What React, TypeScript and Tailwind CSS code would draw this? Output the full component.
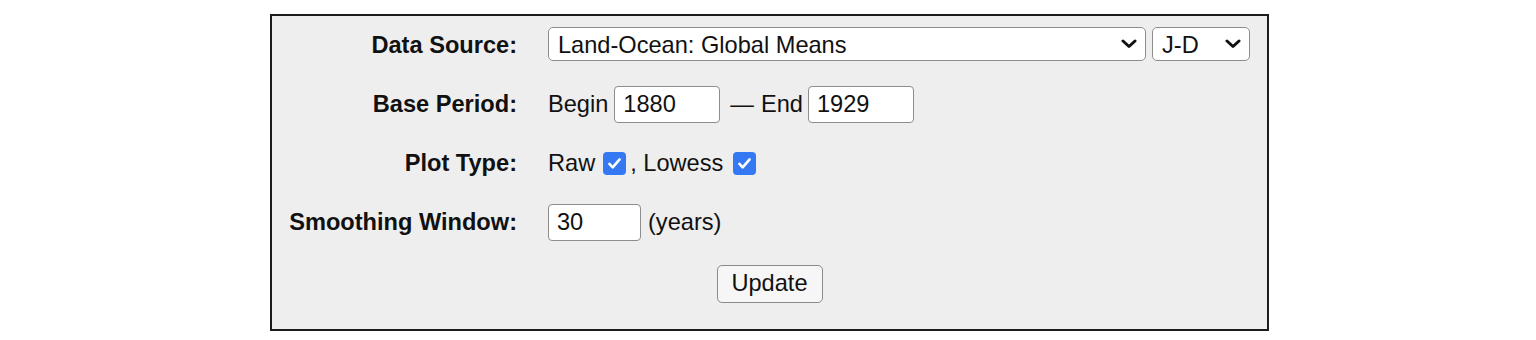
import React from 'react';

const Chevron = ({ className = '' }: { className?: string }) => (
  <svg viewBox="0 0 16 10" className={className} fill="none">
    <path d="M2 2l6 5.5L14 2" stroke="#111" strokeWidth="3" strokeLinecap="round" strokeLinejoin="round" />
  </svg>
);

const Check = () => (
  <span className="inline-flex shrink-0 items-center justify-center w-[23px] h-[23px] rounded-[4px] bg-[#3479f3]">
    <svg viewBox="0 0 16 16" className="w-[17px] h-[17px]" fill="none">
      <path d="M3.2 8.4l3.1 3.2L12.8 4.2" stroke="#fff" strokeWidth="2.5" strokeLinecap="round" strokeLinejoin="round" />
    </svg>
  </span>
);

const Label = ({ children }: { children: React.ReactNode }) => (
  <div className="text-right font-bold">{children}</div>
);

const inputCls =
  'h-[37px] px-[8px] bg-white border border-[#8d8d8d] rounded-[4px] text-[#111] outline-none';

export default function App() {
  return (
    <div className="w-[1536px] h-[340px] bg-white pt-[14px] font-['Liberation_Sans',Arial,sans-serif] text-[23.6px] text-[#111]">
      <div className="ml-[270px] w-[999px] h-[317px] border-2 border-[#1c1c1c] bg-[#eeeeee]">
        <div className="grid grid-cols-[245px_1fr] gap-x-[31px] [&>*]:h-[59px] [&>*]:flex [&>*]:items-center [&>div:nth-child(odd)]:justify-end">
          <Label>Data Source:</Label>
          <div className="gap-[6px]">
            <div className="relative">
              <select
                defaultValue="lo"
                className="appearance-none w-[598px] h-[34px] pl-[9px] bg-white border border-[#8d8d8d] rounded-[5px] text-[#111]"
              >
                <option value="lo">Land-Ocean: Global Means</option>
              </select>
              <Chevron className="absolute right-[9px] top-[12px] w-[16px] h-[10px] pointer-events-none" />
            </div>
            <div className="relative">
              <select
                defaultValue="jd"
                className="appearance-none w-[98px] h-[34px] pl-[9px] bg-white border border-[#8d8d8d] rounded-[5px] text-[#111]"
              >
                <option value="jd">J-D</option>
              </select>
              <Chevron className="absolute right-[9px] top-[12px] w-[16px] h-[10px] pointer-events-none" />
            </div>
          </div>

          <Label>Base Period:</Label>
          <div>
            <span>Begin</span>
            <input className={`${inputCls} w-[106px] ml-[6px]`} defaultValue="1880" />
            <span className="ml-[10px]">—</span>
            <span className="ml-[7px]">End</span>
            <input className={`${inputCls} w-[106px] ml-[5px]`} defaultValue="1929" />
          </div>

          <Label>Plot Type:</Label>
          <div>
            <span>Raw</span>
            <span className="ml-[8px] flex"><Check /></span>
            <span className="ml-[4px]">, Lowess</span>
            <span className="ml-[10px] flex"><Check /></span>
          </div>

          <Label>Smoothing Window:</Label>
          <div>
            <input className={`${inputCls} w-[93px] px-[6px]`} defaultValue="30" />
            <span className="ml-[7px]">(years)</span>
          </div>
        </div>
        <div className="flex justify-center h-[64px] items-center">
          <button className="w-[106px] h-[38px] bg-[#f6f6f6] border border-[#8a8a8a] rounded-[5px] text-[#111]">
            Update
          </button>
        </div>
      </div>
    </div>
  );
}
